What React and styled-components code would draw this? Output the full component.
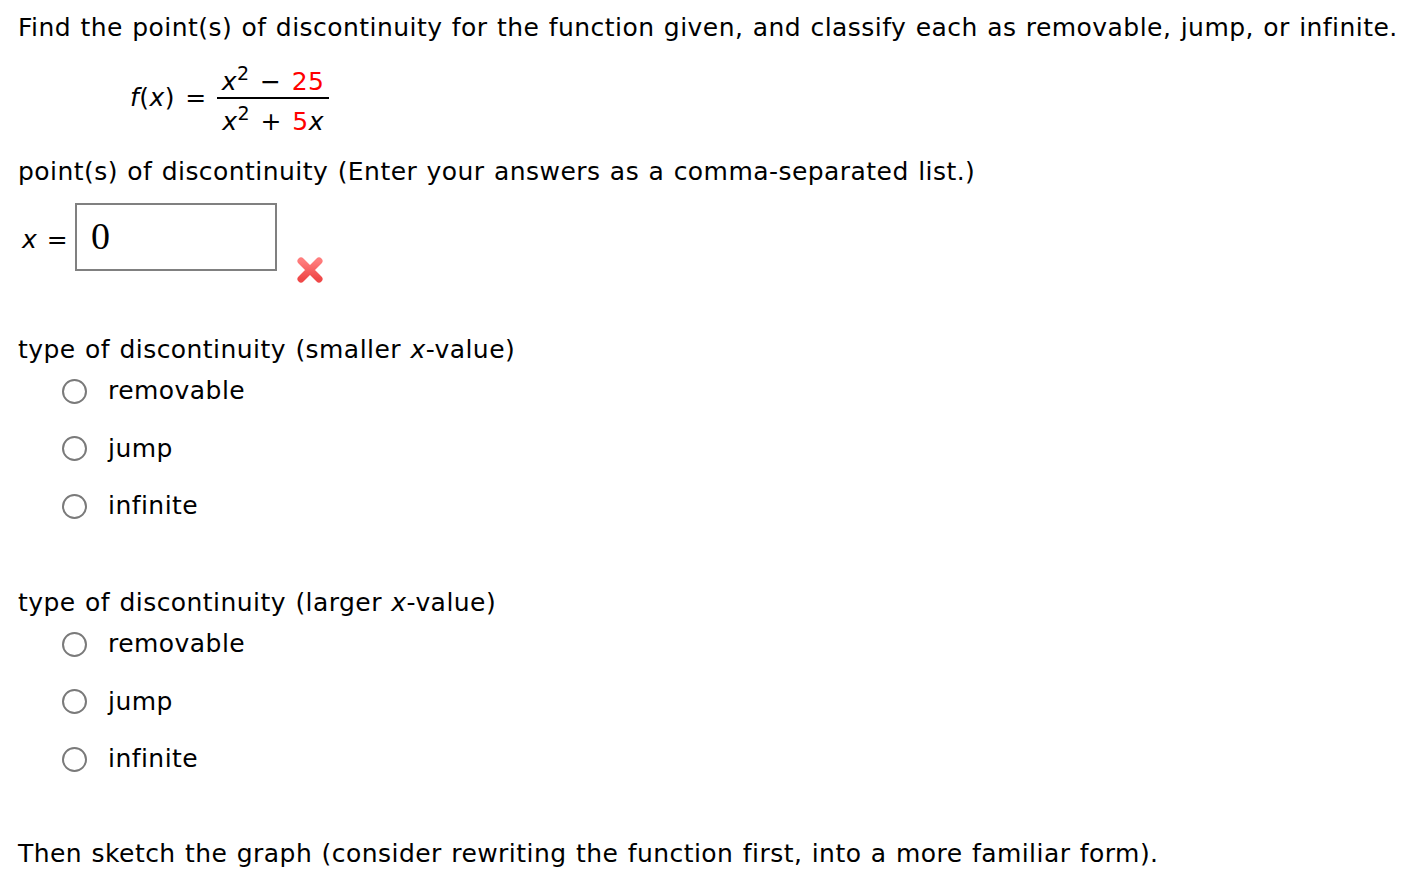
import React from "react";
import styled, { createGlobalStyle } from "styled-components";

const GlobalStyle = createGlobalStyle`
  body {
    margin: 0;
    background: #fff;
    color: #000;
    font-family: "DejaVu Sans", Verdana, sans-serif;
    font-size: 25px;
    letter-spacing: 0.45px;
    word-spacing: 1px;
  }
`;

const Page = styled.div`
  padding: 10px 0 0 18px;
`;

const Para = styled.p`
  margin: ${(p) => p.$margin || "0"};
  line-height: 36px;
  white-space: nowrap;
`;

const Var = styled.i`
  font-style: italic;
`;

const Red = styled.span`
  color: #ff0000;
`;

const Formula = styled.div`
  display: flex;
  align-items: center;
  gap: 10px;
  margin: 21px 0 0 112px;
  word-spacing: 2px;
`;

const FuncName = styled.span`
  margin-bottom: 8px;
  line-height: 36px;
`;

const Fraction = styled.div`
  display: inline-flex;
  flex-direction: column;
  align-items: center;
`;

const Numer = styled.div`
  padding: 0 5px;
  border-bottom: 2px solid #000;
  line-height: 30px;
`;

const Denom = styled.div`
  padding: 8px 5px 0;
  line-height: 30px;
`;

const Sup = styled.span`
  font-size: 0.76em;
  vertical-align: 0.55em;
  line-height: 0;
`;

const AnswerRow = styled.div`
  display: flex;
  align-items: flex-start;
  margin-top: 13px;
`;

const AnswerLabel = styled.span`
  margin: 19px 7px 0 4px;
  line-height: 36px;
`;

const AnswerBox = styled.div`
  width: 202px;
  height: 68px;
  border: 2px solid #808080;
  font-family: "Liberation Serif", "Times New Roman", serif;
  font-size: 38px;
  padding: 11px 0 0 14px;
  box-sizing: border-box;
  line-height: 40px;
`;

const Wrong = styled.svg`
  margin: 53px 0 0 19px;
`;

const Section = styled.div`
  margin-top: ${(p) => p.$top};
`;

const Options = styled.div`
  display: flex;
  flex-direction: column;
  gap: 21.5px;
  margin: 5px 0 0 44px;
`;

const Option = styled.label`
  display: flex;
  align-items: center;
  gap: 21px;
  line-height: 36px;
`;

const Radio = styled.span`
  width: 21px;
  height: 21px;
  border: 2px solid #7a7a7a;
  border-radius: 50%;
`;

const choices = ["removable", "jump", "infinite"];

const Choices = () => (
  <Options>
    {choices.map((c) => (
      <Option key={c}>
        <Radio />
        {c}
      </Option>
    ))}
  </Options>
);

const App = () => {
  return (
    <Page>
      <GlobalStyle />
      <Para>
        Find the point(s) of discontinuity for the function given, and classify each as removable, jump, or infinite.
      </Para>
      <Formula>
        <FuncName>
          <Var>f</Var>(<Var>x</Var>) =
        </FuncName>
        <Fraction>
          <Numer>
            <Var>x</Var>
            <Sup>2</Sup> − <Red>25</Red>
          </Numer>
          <Denom>
            <Var>x</Var>
            <Sup>2</Sup> + <Red>5</Red>
            <Var>x</Var>
          </Denom>
        </Fraction>
      </Formula>
      <Para $margin="17px 0 0">
        point(s) of discontinuity (Enter your answers as a comma-separated list.)
      </Para>
      <AnswerRow>
        <AnswerLabel>
          <Var>x</Var> =
        </AnswerLabel>
        <AnswerBox>0</AnswerBox>
        <Wrong width="28" height="28" viewBox="0 0 28 28">
          <defs>
            <linearGradient id="xg" x1="0" y1="0" x2="0" y2="1">
              <stop offset="0" stopColor="#ff7c7c" />
              <stop offset="1" stopColor="#ef4848" />
            </linearGradient>
          </defs>
          <path
            d="M5 5 L23 23 M23 5 L5 23"
            stroke="url(#xg)"
            strokeWidth="7"
            strokeLinecap="round"
          />
        </Wrong>
      </AnswerRow>
      <Section $top="48px">
        <Para>
          type of discontinuity (smaller <Var>x</Var>-value)
        </Para>
        <Choices />
      </Section>
      <Section $top="61px">
        <Para>
          type of discontinuity (larger <Var>x</Var>-value)
        </Para>
        <Choices />
      </Section>
      <Para $margin="59px 0 0">
        Then sketch the graph (consider rewriting the function first, into a more familiar form).
      </Para>
    </Page>
  );
};

export default App;
